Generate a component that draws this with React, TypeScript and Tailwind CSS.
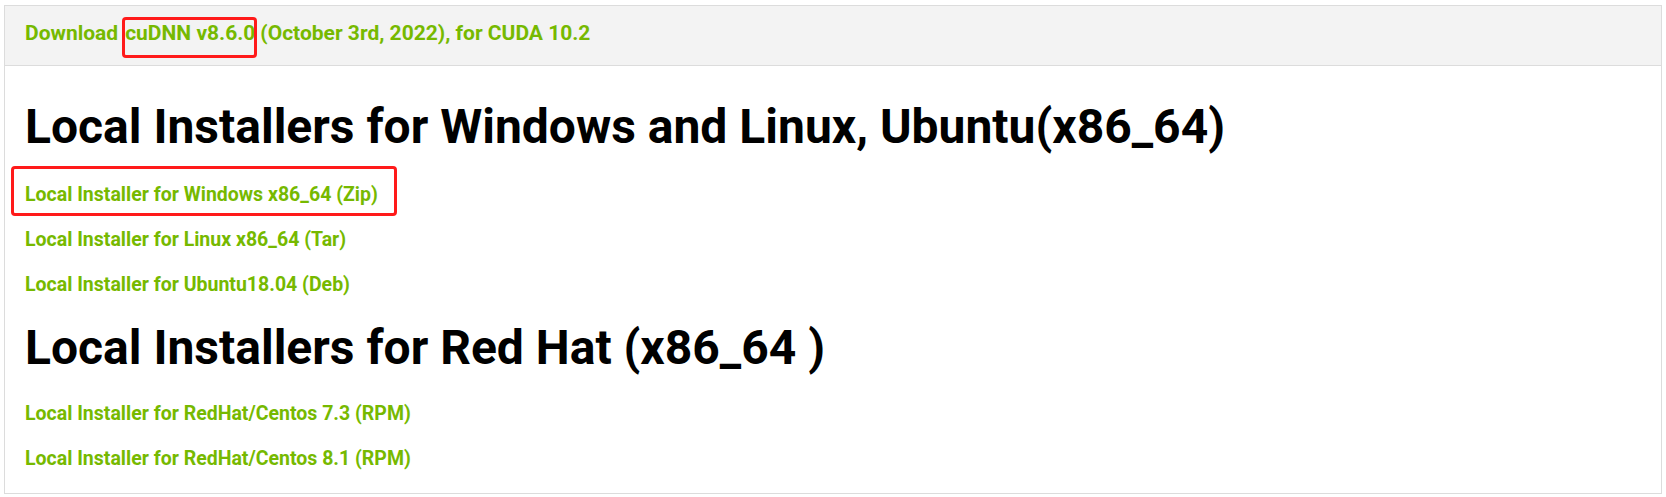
import React from "react";

const font = { fontFamily: "Roboto, 'Liberation Sans', Arial, sans-serif" };

function LinkRow({ children, boxed = false }: { children: React.ReactNode; boxed?: boolean }) {
  return (
    <div className="h-[45px] flex items-center">
      <span className="relative text-[19.5px] font-bold text-[#76b900]">
        {children}
        {boxed && (
          <span className="absolute left-[-14px] right-[-19px] top-[-14px] bottom-[-7px] border-[3px] border-[#ff1a1a] rounded-[4px]" />
        )}
      </span>
    </div>
  );
}

export default function App() {
  return (
    <div className="w-[1666px] h-[497px] bg-white pt-[5px] pl-[4px]" style={font}>
      <div className="w-[1658px] h-[489px] border border-[#dcdcdc] flex flex-col">
        <div className="h-[60px] shrink-0 bg-[#f3f3f3] border-b border-[#dcdcdc] flex items-stretch pl-[20px] text-[21px] font-bold text-[#76b900]">
          <span className="flex items-center pb-[3px]">Download</span>
          <span className="relative flex items-center pb-[3px] ml-[4px] pl-[3px] pr-[2px]">
            cuDNN v8.6.0
            <span className="absolute left-[0px] right-[0px] top-[11px] bottom-[7px] border-[3px] border-[#ff1a1a] rounded-[4px]" />
          </span>
          <span className="flex items-center pb-[3px] ml-[3px]">(October 3rd, 2022), for CUDA 10.2</span>
        </div>
        <div className="pl-[20px] flex flex-col">
          <h1 className="text-[48px] font-bold text-black leading-none mt-[37px] mb-[21px]">
            Local Installers for Windows and Linux, Ubuntu(x86_64)
          </h1>
          <LinkRow boxed>Local Installer for Windows x86_64 (Zip)</LinkRow>
          <LinkRow>Local Installer for Linux x86_64 (Tar)</LinkRow>
          <LinkRow>Local Installer for Ubuntu18.04 (Deb)</LinkRow>
          <h2 className="text-[48px] font-bold text-black leading-none mt-[17px] mb-[19px]">
            Local Installers for Red Hat (x86_64 )
          </h2>
          <LinkRow>Local Installer for RedHat/Centos 7.3 (RPM)</LinkRow>
          <LinkRow>Local Installer for RedHat/Centos 8.1 (RPM)</LinkRow>
        </div>
      </div>
    </div>
  );
}
